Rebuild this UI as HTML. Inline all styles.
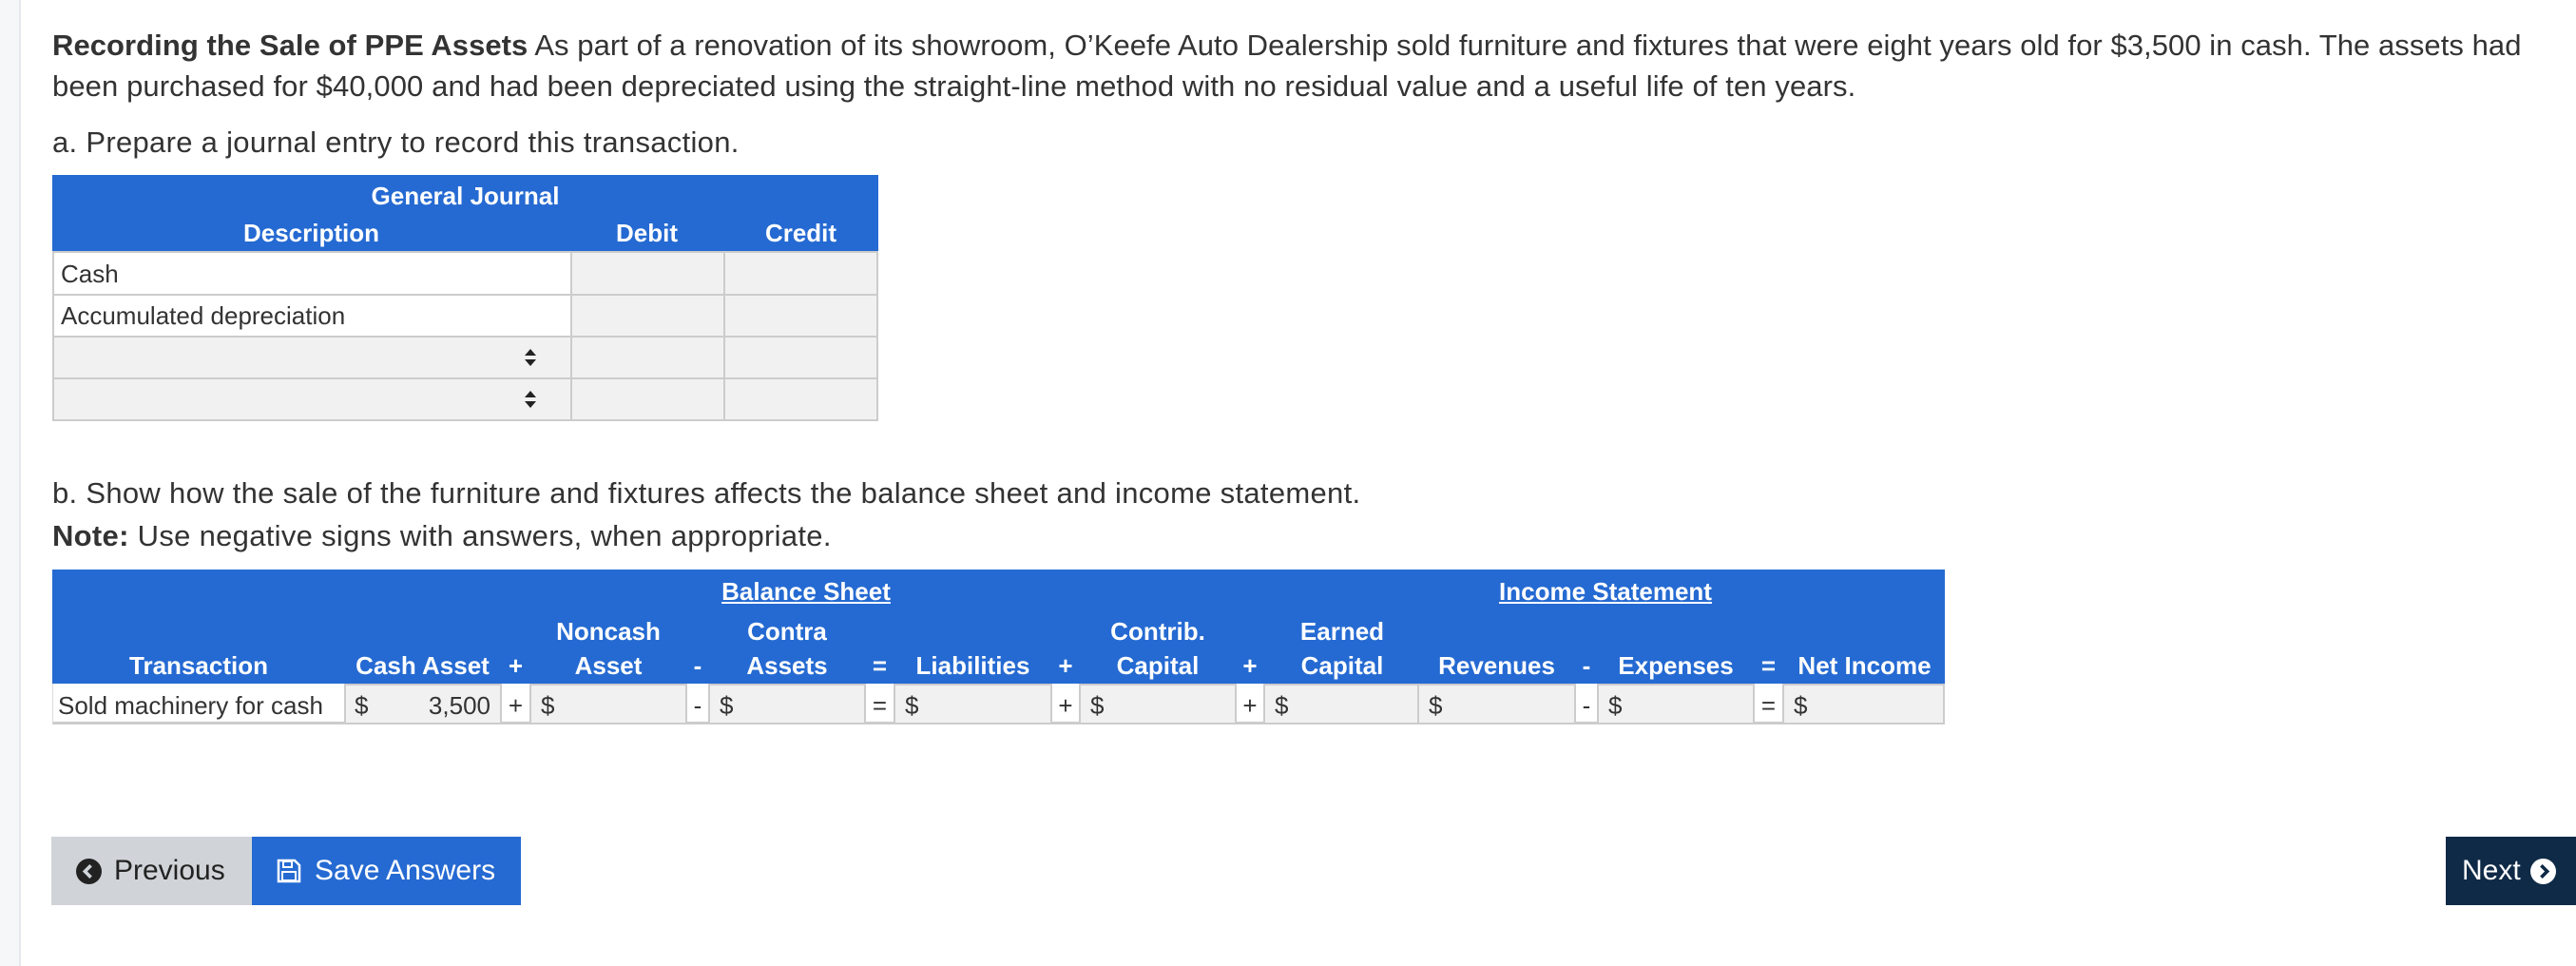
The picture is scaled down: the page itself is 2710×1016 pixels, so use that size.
<!DOCTYPE html>
<html><head><meta charset="utf-8"><style>
*{margin:0;padding:0;box-sizing:border-box}
body{width:2710px;height:1016px;background:#fff;font-family:"Liberation Sans",sans-serif;color:#333;position:relative;overflow:hidden}
.strip{position:absolute;left:0;top:0;width:22px;height:1016px;background:#f6f7f9;border-right:2px solid #e6e8eb}
.t{position:absolute;left:55px;font-size:31px;letter-spacing:0.4px;white-space:nowrap;line-height:43px}
.abs{position:absolute}
.hdr{background:#256ad2;color:#fff;font-weight:bold}
.c{position:absolute;font-size:26px;line-height:1}
.cell{position:absolute;background:#f1f1f1;border:2px solid #ccc}
.wcell{position:absolute;background:#fff;border:2px solid #ccc}
.btn{position:absolute;top:880px;height:72px;font-size:30px;display:flex;align-items:center}
</style></head><body>
<div class="strip"></div>
<div class="t" style="top:26px;letter-spacing:0.06px"><b>Recording the Sale of PPE Assets</b> As part of a renovation of its showroom, O’Keefe Auto Dealership sold furniture and fixtures that were eight years old for $3,500 in cash. The assets had</div>
<div class="t" style="top:69px;letter-spacing:0.1px">been purchased for $40,000 and had been depreciated using the straight-line method with no residual value and a useful life of ten years.</div>
<div class="t" style="top:128px;letter-spacing:0.3px">a. Prepare a journal entry to record this transaction.</div>

<!-- journal -->
<div class="abs hdr" style="left:55px;top:184px;width:869px;height:81px"></div>
<div class="c" style="left:55px;width:869px;top:193px;text-align:center;color:#fff;font-weight:bold">General Journal</div>
<div class="c" style="left:55px;width:545px;top:232px;text-align:center;color:#fff;font-weight:bold">Description</div>
<div class="c" style="left:600px;width:161px;top:232px;text-align:center;color:#fff;font-weight:bold">Debit</div>
<div class="c" style="left:761px;width:163px;top:232px;text-align:center;color:#fff;font-weight:bold">Credit</div>
<div class="wcell" style="left:55px;top:264px;width:547px;height:47px"></div>
<div class="wcell" style="left:55px;top:309px;width:547px;height:46px"></div>
<div class="cell" style="left:55px;top:353px;width:547px;height:46px"></div>
<div class="cell" style="left:55px;top:397px;width:547px;height:46px"></div>
<div class="cell" style="left:600px;top:264px;width:163px;height:47px"></div>
<div class="cell" style="left:600px;top:309px;width:163px;height:46px"></div>
<div class="cell" style="left:600px;top:353px;width:163px;height:46px"></div>
<div class="cell" style="left:600px;top:397px;width:163px;height:46px"></div>
<div class="cell" style="left:761px;top:264px;width:163px;height:47px"></div>
<div class="cell" style="left:761px;top:309px;width:163px;height:46px"></div>
<div class="cell" style="left:761px;top:353px;width:163px;height:46px"></div>
<div class="cell" style="left:761px;top:397px;width:163px;height:46px"></div>
<div class="c" style="left:64px;top:275px">Cash</div>
<div class="c" style="left:64px;top:319px">Accumulated depreciation</div>
<svg class="abs" style="left:551px;top:366px" width="14" height="20"><path d="M7 1L13 8H1Z M7 19L13 12H1Z" fill="#222"/></svg>
<svg class="abs" style="left:551px;top:410px" width="14" height="20"><path d="M7 1L13 8H1Z M7 19L13 12H1Z" fill="#222"/></svg>

<div class="t" style="top:497px;letter-spacing:0.3px">b. Show how the sale of the furniture and fixtures affects the balance sheet and income statement.</div>
<div class="t" style="top:542px;letter-spacing:0.3px"><b>Note:</b> Use negative signs with answers, when appropriate.</div>

<!-- balance -->
<div class="abs hdr" style="left:55px;top:599px;width:1991px;height:121px"></div>
<div class="c" style="left:748px;width:200px;top:609px;text-align:center;color:#fff;font-weight:bold;text-decoration:underline">Balance Sheet</div>
<div class="c" style="left:1539px;width:300px;top:609px;text-align:center;color:#fff;font-weight:bold;text-decoration:underline">Income Statement</div>
<div style="position:absolute;top:649px;left:0;color:#fff;font-weight:bold;font-size:26px">
<div class="abs" style="left:559px;width:162px;text-align:center">Noncash</div>
<div class="abs" style="left:747px;width:162px;text-align:center">Contra</div>
<div class="abs" style="left:1137px;width:162px;text-align:center">Contrib.</div>
<div class="abs" style="left:1331px;width:162px;text-align:center">Earned</div>
</div>
<div style="position:absolute;top:685px;left:0;color:#fff;font-weight:bold;font-size:26px;white-space:nowrap">
<div class="abs" style="left:55px;width:308px;text-align:center">Transaction</div>
<div class="abs" style="left:363px;width:163px;text-align:center">Cash Asset</div>
<div class="abs" style="left:526px;width:33px;text-align:center">+</div>
<div class="abs" style="left:559px;width:162px;text-align:center">Asset</div>
<div class="abs" style="left:721px;width:26px;text-align:center">-</div>
<div class="abs" style="left:747px;width:162px;text-align:center">Assets</div>
<div class="abs" style="left:909px;width:33px;text-align:center">=</div>
<div class="abs" style="left:942px;width:163px;text-align:center">Liabilities</div>
<div class="abs" style="left:1105px;width:32px;text-align:center">+</div>
<div class="abs" style="left:1137px;width:162px;text-align:center">Capital</div>
<div class="abs" style="left:1299px;width:32px;text-align:center">+</div>
<div class="abs" style="left:1331px;width:162px;text-align:center">Capital</div>
<div class="abs" style="left:1493px;width:163px;text-align:center">Revenues</div>
<div class="abs" style="left:1656px;width:26px;text-align:center">-</div>
<div class="abs" style="left:1682px;width:162px;text-align:center">Expenses</div>
<div class="abs" style="left:1844px;width:33px;text-align:center">=</div>
<div class="abs" style="left:1877px;width:169px;text-align:center">Net Income</div>
</div>
<div class="abs" style="left:55px;top:719px;width:1991px;height:43px;background:#fff;border-bottom:3px solid #ccc;border-left:1px solid #ddd;border-right:2px solid #ccc"></div>
<div class="cell" style="left:362px;top:719px;width:166px;height:43px"></div>
<div class="cell" style="left:557px;top:719px;width:166px;height:43px"></div>
<div class="cell" style="left:745px;top:719px;width:166px;height:43px"></div>
<div class="cell" style="left:940px;top:719px;width:167px;height:43px"></div>
<div class="cell" style="left:1135px;top:719px;width:166px;height:43px"></div>
<div class="cell" style="left:1329px;top:719px;width:329px;height:43px"></div>
<div class="cell" style="left:1491px;top:719px;width:167px;height:43px"></div>
<div class="cell" style="left:1680px;top:719px;width:166px;height:43px"></div>
<div class="cell" style="left:1875px;top:719px;width:171px;height:43px"></div>
<div style="position:absolute;top:727px;left:0;font-size:26px;white-space:nowrap">
<div class="abs" style="left:61px">Sold machinery for cash</div>
<div class="abs" style="left:373px">$</div>
<div class="abs" style="left:400px;width:116px;text-align:right">3,500</div>
<div class="abs" style="left:526px;width:33px;text-align:center">+</div>
<div class="abs" style="left:569px">$</div>
<div class="abs" style="left:721px;width:26px;text-align:center">-</div>
<div class="abs" style="left:757px">$</div>
<div class="abs" style="left:909px;width:33px;text-align:center">=</div>
<div class="abs" style="left:952px">$</div>
<div class="abs" style="left:1105px;width:32px;text-align:center">+</div>
<div class="abs" style="left:1147px">$</div>
<div class="abs" style="left:1299px;width:32px;text-align:center">+</div>
<div class="abs" style="left:1341px">$</div>
<div class="abs" style="left:1503px">$</div>
<div class="abs" style="left:1656px;width:26px;text-align:center">-</div>
<div class="abs" style="left:1692px">$</div>
<div class="abs" style="left:1844px;width:33px;text-align:center">=</div>
<div class="abs" style="left:1887px">$</div>
</div>

<!-- buttons -->
<div class="btn" style="left:54px;width:211px;background:#d0d4d8;color:#222">
<svg style="margin-left:26px;margin-right:13px" width="27" height="27" viewBox="0 0 26 26"><circle cx="13" cy="13" r="13" fill="#222"/><path d="M15 7L9 13L15 19" stroke="#d0d4d8" stroke-width="3.5" fill="none"/></svg>Previous</div>
<div class="btn" style="left:265px;width:283px;background:#256ad2;color:#fff">
<svg style="margin-left:26px;margin-right:14px" width="26" height="26" viewBox="0 0 26 26"><path d="M2 2H19L24 7V24H2Z" stroke="#fff" stroke-width="2.5" fill="none"/><rect x="7" y="3" width="9" height="6" stroke="#fff" stroke-width="2" fill="none"/><rect x="6" y="14" width="14" height="9" stroke="#fff" stroke-width="2" fill="none"/></svg>Save Answers</div>
<div class="btn" style="left:2573px;width:137px;background:#0f2a47;color:#fff">
<span style="margin-left:17px;margin-right:10px">Next</span><svg width="27" height="27" viewBox="0 0 26 26"><circle cx="13" cy="13" r="13" fill="#fff"/><path d="M11 7L17 13L11 19" stroke="#0f2a47" stroke-width="3.5" fill="none"/></svg></div>
</body></html>
